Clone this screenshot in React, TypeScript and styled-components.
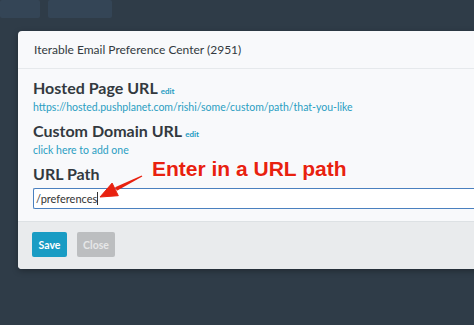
import { createGlobalStyle, styled } from 'styled-components';

const GlobalStyle = createGlobalStyle`
    html, body {
        margin: 0;
        padding: 0;
        width: 474px;
        height: 325px;
        overflow: hidden;
        background: #2f3c48;
        font-family: Lato, "Open Sans", sans-serif;
    }
`;

const Page = styled.div`
    position: relative;
    width: 474px;
    height: 325px;
    overflow: hidden;
    background: #2f3c48;
`;

const TagRow = styled.div`
    display: flex;
    gap: 8px;
`;

const Tag = styled.div<{ $w: number }>`
    width: ${({ $w }) => $w}px;
    height: 18px;
    background: #344556;
    border-radius: 2px;
`;

const Modal = styled.div`
    position: absolute;
    left: 18px;
    top: 31px;
    width: 480px;
    border-radius: 4px;
    overflow: hidden;
    background: #f8f9fb;
    box-shadow: 0 2px 6px rgba(0, 0, 0, 0.3);
`;

const Header = styled.div`
    height: 37px;
    display: flex;
    align-items: center;
    padding-left: 16px;
    font-size: 12px;
    color: #333a40;
    border-bottom: 1px solid #e6e9ec;
`;

const Body = styled.div`
    display: flex;
    flex-direction: column;
    padding: 10px 0 12px 15px;
    border-bottom: 1px solid #dde1e4;
`;

const Section = styled.div`
    display: flex;
    flex-direction: column;
    margin-bottom: 7px;
`;

const Title = styled.div`
    font-size: 16px;
    font-weight: 700;
    color: #33393f;
    line-height: 18px;
`;

const Edit = styled.span`
    font-size: 8px;
    font-weight: 700;
    color: #1e9cc2;
    margin-left: 3px;
`;

const Link = styled.a`
    font-size: 10.5px;
    color: #2a9ec2;
    line-height: 15px;
    text-decoration: none;
`;

const Input = styled.div`
    margin-top: 5px;
    height: 19px;
    display: flex;
    align-items: center;
    padding-left: 2px;
    border: 1.5px solid #4a80bf;
    border-right: none;
    border-radius: 2px 0 0 2px;
    background: #fff;
    font-size: 11px;
    color: #333;
`;

const Caret = styled.span`
    display: inline-block;
    width: 1px;
    height: 13px;
    background: #333;
`;

const Footer = styled.div`
    display: flex;
    gap: 10px;
    padding: 10px 0 12px 14px;
    background: #e9ebed;
`;

const Button = styled.button<{ $primary?: boolean }>`
    width: ${({ $primary }) => ($primary ? 35 : 38)}px;
    height: 25px;
    border: none;
    border-radius: 2px;
    padding: 0;
    font-family: Lato, sans-serif;
    font-size: 10.5px;
    font-weight: 700;
    background: ${({ $primary }) => ($primary ? '#199cc4' : '#bcbec0')};
    color: ${({ $primary }) => ($primary ? '#ffffff' : '#e6e7e8')};
`;

const Note = styled.div`
    position: absolute;
    left: 152px;
    top: 157px;
    font-family: "Liberation Sans", Arial, sans-serif;
    font-size: 21px;
    font-weight: 700;
    color: #e8210f;
    text-shadow: 0 0 2px #fff, 1px 1px 2px #fff;
`;

const Arrow = styled.svg`
    position: absolute;
    left: 92px;
    top: 170px;
`;

export default function App() {
    return (
        <Page>
            <GlobalStyle />
            <TagRow>
                <Tag $w={40} />
                <Tag $w={64} />
            </TagRow>
            <Modal>
                <Header>Iterable Email Preference Center (2951)</Header>
                <Body>
                    <Section>
                        <Title>
                            Hosted Page URL<Edit>edit</Edit>
                        </Title>
                        <Link>https://hosted.pushplanet.com/rishi/some/custom/path/that-you-like</Link>
                    </Section>
                    <Section>
                        <Title>
                            Custom Domain URL<Edit>edit</Edit>
                        </Title>
                        <Link>click here to add one</Link>
                    </Section>
                    <Title>URL Path</Title>
                    <Input>
                        /preferences<Caret />
                    </Input>
                </Body>
                <Footer>
                    <Button $primary>Save</Button>
                    <Button>Close</Button>
                </Footer>
            </Modal>
            <Note>Enter in a URL path</Note>
            <Arrow width="56" height="32" viewBox="0 0 56 32">
                <polygon points="50.3,6.6 49.7,5.4 23.1,17.2 24.9,20.8" fill="#e8210f" />
                <polygon points="8,27 20.1,13.1 26.3,25.7" fill="#e8210f" stroke="#e8210f" strokeWidth="1" strokeLinejoin="round" />
            </Arrow>
        </Page>
    );
}
